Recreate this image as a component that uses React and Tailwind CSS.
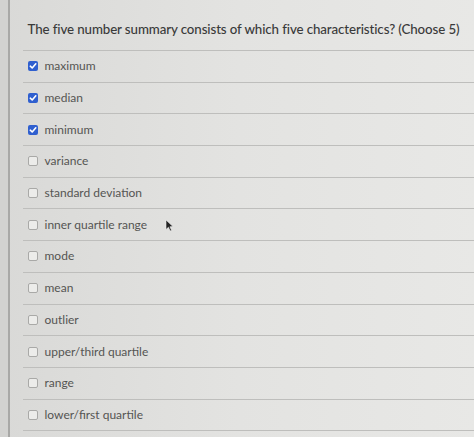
import React from "react";

const options = [
  { label: "maximum", checked: true },
  { label: "median", checked: true },
  { label: "minimum", checked: true },
  { label: "variance", checked: false },
  { label: "standard deviation", checked: false },
  { label: "inner quartile range", checked: false },
  { label: "mode", checked: false },
  { label: "mean", checked: false },
  { label: "outlier", checked: false },
  { label: "upper/third quartile", checked: false },
  { label: "range", checked: false },
  { label: "lower/first quartile", checked: false },
];

function Checkbox({ checked }) {
  if (checked) {
    return (
      <span className="flex h-[10px] w-[10px] items-center justify-center rounded-[2px] bg-[#2f5fcf]">
        <svg width="8" height="8" viewBox="0 0 8 8" fill="none">
          <path d="M1.3 4.2 L3.2 6 L6.8 1.8" stroke="#fff" strokeWidth="1.6" strokeLinecap="round" strokeLinejoin="round" />
        </svg>
      </span>
    );
  }
  return <span className="h-[10px] w-[10px] rounded-[2px] border border-[#a9a9a7] bg-[#ececea]" />;
}

function Cursor() {
  return (
    <svg className="absolute left-[165px] top-[219px]" width="9" height="13" viewBox="0 0 9 13">
      <path d="M1 1 L1 10.5 L3.4 8.3 L5.2 12 L6.6 11.3 L4.9 7.8 L8 7.6 Z" fill="#222" stroke="#eee" strokeWidth="0.6" />
    </svg>
  );
}

export default function App() {
  return (
    <div
      className="relative flex h-[437px] w-[474px] overflow-hidden bg-gradient-to-r from-[#d9d9d7] via-[#e3e3e1] to-[#e8e8e6]"
      style={{ fontFamily: "Lato, 'Open Sans', sans-serif" }}
    >
      <div className="w-[8px] shrink-0 bg-[#d2d2d0]" />
      <div className="w-[1.5px] shrink-0 bg-[#a8a8a6]" />
      <div className="min-w-0 flex-1 pl-[13px]">
        <h1 className="whitespace-nowrap pt-[20px] pb-[12px] pl-[5px] text-[13.3px] font-medium leading-[18px] tracking-[-0.1px] text-[#3a3a3a]">
          The five number summary consists of which five characteristics? (Choose 5)
        </h1>
        <div className="border-t border-[#bebebc]">
          {options.map((opt) => (
            <div
              key={opt.label}
              className="flex h-[31.7px] items-center gap-[7px] border-b border-[#bebebc] pl-[5px]"
            >
              <Checkbox checked={opt.checked} />
              <span className="text-[12px] leading-[14px] text-[#555553]">{opt.label}</span>
            </div>
          ))}
        </div>
      </div>
      <Cursor />
    </div>
  );
}
